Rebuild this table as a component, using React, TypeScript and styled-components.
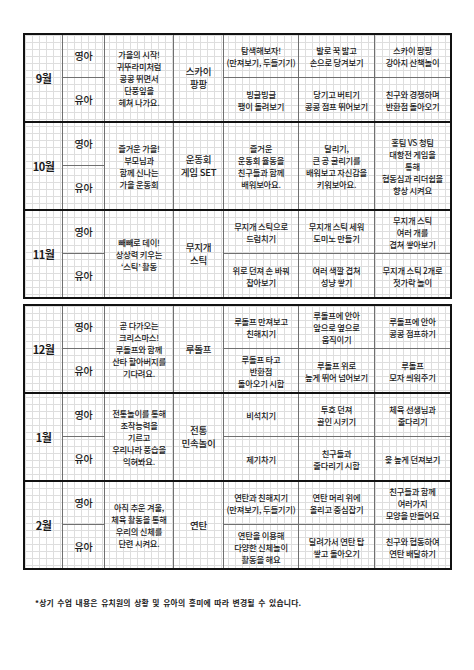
import React from "react";
import styled, {createGlobalStyle} from "styled-components";

const GlobalStyle = createGlobalStyle`
    * {
        box-sizing: border-box;
    }
    body {
        margin: 0;
        background: #fff;
        font-family: "Noto Sans CJK KR", "Noto Sans", sans-serif;
        color: #1a1a1a;
    }
`

const Page = styled.div`
    width: 474px;
    height: 670px;
    padding: 33px 0 0 23px;
    display: flex;
    flex-direction: column;
    gap: 5px;
`

const Table = styled.div`
    width: 429px;
    border: 2px solid #111;
    background-color: #fff;
    background-image:
        linear-gradient(to right, #dedede 1px, transparent 1px),
        linear-gradient(to bottom, #dedede 1px, transparent 1px);
    background-size: 7px 7px;
`

const MonthBlock = styled.div`
    display: grid;
    grid-template-columns: 38px 42px 69px 50px 75px 76px 75px;
    grid-template-rows: 43px 43px;
    border-bottom: 2px solid #111;

    &:last-child {
        border-bottom: none;
    }
`

const Cell = styled.div<{ $span?: boolean; $last?: boolean; $top?: boolean }>`
    grid-row: ${p => (p.$span ? "span 2" : "auto")};
    border-right: ${p => (p.$last ? "none" : "1px solid #707070")};
    border-bottom: ${p => (p.$top ? "1px solid #707070" : "none")};
    display: flex;
    align-items: center;
    justify-content: center;
    text-align: center;
    white-space: pre-line;
    font-size: 8.3px;
    font-weight: 500;
    line-height: 12px;
    letter-spacing: -0.2px;
`

const MonthCell = styled(Cell)`
    font-size: 11px;
    font-weight: 700;
    letter-spacing: -0.5px;
`

const AgeCell = styled(Cell)`
    font-size: 10px;
    font-weight: 500;
`

const ThemeCell = styled(Cell)`
    font-size: 9.5px;
    line-height: 13px;
`

const Note = styled.p`
    margin: 22px 0 0 12px;
    font-size: 7.8px;
    font-weight: 700;
    word-spacing: 1.5px;
    letter-spacing: 0.2px;
`

type Month = {
    name: string;
    goal: string;
    theme: string;
    infant: string[];
    child?: string[];
}

const table1: Month[] = [
    {
        name: "9월",
        goal: "가을의 시작!\n귀뚜라미처럼\n콩콩 뛰면서\n단풍잎을\n헤쳐 나가요.",
        theme: "스카이\n팡팡",
        infant: ["탐색해보자!\n(만져보기, 두들기기)", "발로 꾹 밟고\n손으로 당겨보기", "스카이 팡팡\n강아지 산책놀이"],
        child: ["빙글빙글\n팽이 돌려보기", "당기고 버티기\n콩콩 점프 뛰어보기", "친구와 경쟁하며\n반환점 돌아오기"],
    },
    {
        name: "10월",
        goal: "즐거운 가을!\n부모님과\n함께 신나는\n가을 운동회",
        theme: "운동회\n게임 SET",
        infant: [
            "즐거운\n운동회 율동을\n친구들과 함께\n배워보아요.",
            "달리기,\n큰 공 굴리기를\n배워보고 자신감을\n키워보아요.",
            "홍팀 VS 청팀\n대항전 게임을\n통해\n협동심과 리더쉽을\n향상 시켜요",
        ],
    },
    {
        name: "11월",
        goal: "빼빼로 데이!\n상상력 키우는\n‘스틱’ 활동",
        theme: "무지개\n스틱",
        infant: ["무지개 스틱으로\n드럼치기", "무지개 스틱 세워\n도미노 만들기", "무지개 스틱\n여러 개를\n겹쳐 쌓아보기"],
        child: ["위로 던져 손 바꿔\n잡아보기", "여러 색깔 겹쳐\n성냥 쌓기", "무지개 스틱 2개로\n젓가락 놀이"],
    },
]

const table2: Month[] = [
    {
        name: "12월",
        goal: "곧 다가오는\n크리스마스!\n루돌프와 함께\n산타 할아버지를\n기다려요.",
        theme: "루돌프",
        infant: ["루돌프 만져보고\n친해지기", "루돌프에 안아\n앞으로 옆으로\n움직이기", "루돌프에 안아\n콩콩 점프하기"],
        child: ["루돌프 타고\n반환점\n돌아오기 시합", "루돌프 위로\n높게 뛰어 넘어보기", "루돌프\n모자 씌워주기"],
    },
    {
        name: "1월",
        goal: "전통놀이를 통해\n조작능력을\n기르고\n우리나라 풍습을\n익혀봐요.",
        theme: "전통\n민속놀이",
        infant: ["비석치기", "투호 던져\n골인 시키기", "체육 선생님과\n줄다리기"],
        child: ["제기차기", "친구들과\n줄다리기 시합", "윷 높게 던져보기"],
    },
    {
        name: "2월",
        goal: "아직 추운 겨울,\n체육 활동을 통해\n우리의 신체를\n단련 시켜요.",
        theme: "연탄",
        infant: ["연탄과 친해지기\n(만져보기, 두들기기)", "연탄 머리 위에\n올리고 중심잡기", "친구들과 함께\n여러가지\n모양을 만들어요"],
        child: ["연탄을 이용해\n다양한 신체놀이\n활동을 해요", "달려가서 연탄 탑\n쌓고 돌아오기", "친구와 협동하여\n연탄 배달하기"],
    },
]

function MonthRows({month}: { month: Month }) {
    const merged = !month.child;
    return (
        <MonthBlock>
            <MonthCell $span>{month.name}</MonthCell>
            <AgeCell $top>영아</AgeCell>
            <Cell $span>{month.goal}</Cell>
            <ThemeCell $span>{month.theme}</ThemeCell>
            {month.infant.map((a, i) => (
                <Cell key={i} $span={merged} $top={!merged} $last={i === 2}>{a}</Cell>
            ))}
            <AgeCell>유아</AgeCell>
            {month.child?.map((a, i) => (
                <Cell key={i} $last={i === 2}>{a}</Cell>
            ))}
        </MonthBlock>
    )
}

export default function App() {
    return (
        <Page>
            <GlobalStyle/>
            <Table>
                {table1.map(m => <MonthRows key={m.name} month={m}/>)}
            </Table>
            <Table>
                {table2.map(m => <MonthRows key={m.name} month={m}/>)}
            </Table>
            <Note>*상기 수업 내용은 유치원의 상황 및 유아의 흥미에 따라 변경될 수 있습니다.</Note>
        </Page>
    )
}
